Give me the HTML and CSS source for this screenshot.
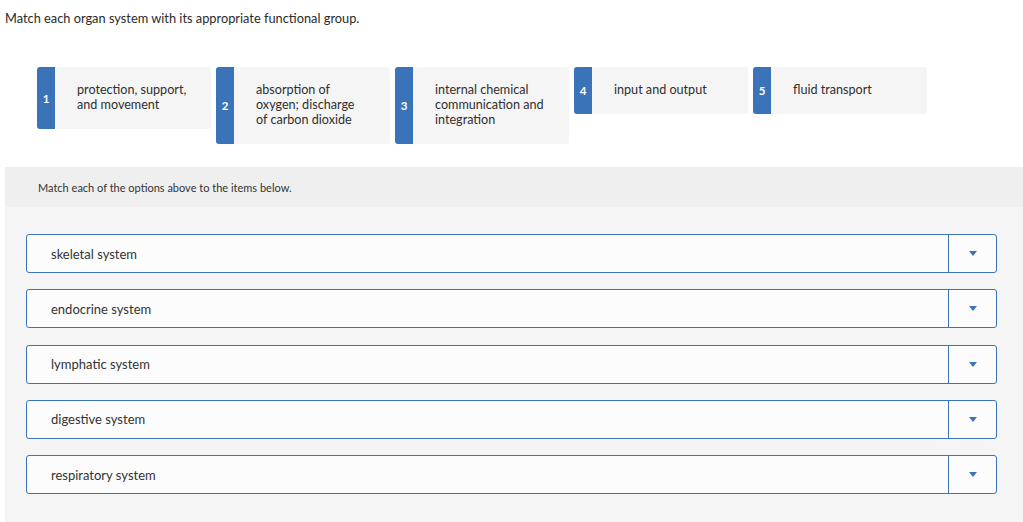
FILE: index.html
```html
<!DOCTYPE html>
<html>
<head>
<meta charset="utf-8">
<link rel="stylesheet" href="styles.css">
</head>
<body>
<p class="prompt">Match each organ system with its appropriate functional group.</p>
<div class="choices">
  <div class="card"><div class="tab">1</div><div class="label">protection, support,<br>and movement</div></div>
  <div class="card"><div class="tab">2</div><div class="label">absorption of<br>oxygen; discharge<br>of carbon dioxide</div></div>
  <div class="card"><div class="tab">3</div><div class="label">internal chemical<br>communication and<br>integration</div></div>
  <div class="card"><div class="tab">4</div><div class="label">input and output</div></div>
  <div class="card"><div class="tab">5</div><div class="label">fluid transport</div></div>
</div>
<div class="panel">
  <div class="panel-head">Match each of the options above to the items below.</div>
  <div class="panel-body">
    <div class="select"><span class="item">skeletal system</span><span class="btn"><span class="caret"></span></span></div>
    <div class="select"><span class="item">endocrine system</span><span class="btn"><span class="caret"></span></span></div>
    <div class="select"><span class="item">lymphatic system</span><span class="btn"><span class="caret"></span></span></div>
    <div class="select"><span class="item">digestive system</span><span class="btn"><span class="caret"></span></span></div>
    <div class="select"><span class="item">respiratory system</span><span class="btn"><span class="caret"></span></span></div>
  </div>
</div>
</body>
</html>
```
FILE: styles.css
```css
html, body {
  margin: 0;
  padding: 0;
  background: #ffffff;
  font-family: "Lato", "Liberation Sans", sans-serif;
  color: #333333;
  overflow: hidden;
}
.prompt {
  margin: 0;
  padding: 11px 0 0 5px;
  font-size: 12.8px;
  line-height: 15px;
  color: #2a2a2a;
}
.choices {
  display: flex;
  align-items: flex-start;
  gap: 5px;
  margin: 41px 0 0 37px;
}
.card {
  display: flex;
  width: 174px;
  background: #f5f5f5;
  border-radius: 3px;
}
.tab {
  width: 18px;
  flex: none;
  background: #3a73b8;
  color: #ffffff;
  font-weight: 700;
  font-size: 11.5px;
  display: flex;
  align-items: center;
  justify-content: center;
  border-radius: 3px 0 0 3px;
}
.label {
  padding: 15px 10px 17px 22px;
  font-size: 12.6px;
  line-height: 15px;
  color: #2f2f2f;
  white-space: nowrap;
}
.panel {
  margin: 23px 0 0 5px;
  background: #f5f5f5;
}
.panel-head {
  height: 40px;
  display: flex;
  align-items: center;
  padding-left: 33px;
  background: #efefef;
  font-size: 11px;
  color: #333333;
}
.panel-body {
  padding: 27px 26px 30px 21px;
  display: flex;
  flex-direction: column;
  gap: 16.25px;
}
.select {
  display: flex;
  height: 39px;
  box-sizing: border-box;
  border: 1px solid #3a73b8;
  border-radius: 3px;
  background: #fcfcfc;
}
.item {
  flex: 1;
  display: flex;
  align-items: center;
  padding-left: 24px;
  font-size: 13px;
  color: #333333;
}
.btn {
  width: 47px;
  border-left: 1px solid #3a73b8;
  display: flex;
  align-items: center;
  justify-content: center;
}
.caret {
  width: 0;
  height: 0;
  border-left: 4px solid transparent;
  border-right: 4px solid transparent;
  border-top: 5px solid #3a73b8;
}
```
